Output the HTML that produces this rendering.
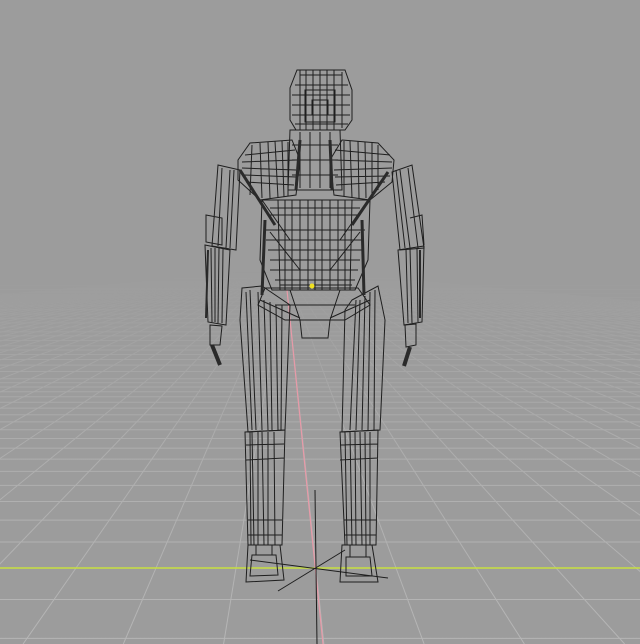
<!DOCTYPE html>
<html><head><meta charset="utf-8"><style>
html,body{margin:0;padding:0;background:#9c9c9c;width:640px;height:644px;overflow:hidden}
svg{display:block}
</style></head><body>
<svg id="s" width="640" height="644" viewBox="0 0 640 644" xmlns="http://www.w3.org/2000/svg">
<defs>
<linearGradient id="fg" x1="0" y1="0" x2="0" y2="1" gradientUnits="objectBoundingBox">
<stop offset="0" stop-color="#fff" stop-opacity="0"/>
<stop offset="0.42" stop-color="#fff" stop-opacity="0"/>
<stop offset="0.7" stop-color="#fff" stop-opacity="0.7"/>
<stop offset="1" stop-color="#fff" stop-opacity="1"/>
</linearGradient>
<mask id="m" maskUnits="userSpaceOnUse" x="0" y="0" width="640" height="644"><rect width="640" height="644" fill="url(#fg)"/></mask>
</defs>
<rect width="640" height="644" fill="#9c9c9c"/>
<g id="grid" stroke="#b6b6b6" stroke-width="1" fill="none" mask="url(#m)"></g>
<line x1="0" y1="568" x2="640" y2="568" stroke="#c8e040" stroke-width="1.5"/>
<line x1="287" y1="290" x2="323" y2="644" stroke="#e89aa8" stroke-width="1.2"/>
<g stroke="#1e1e1e" stroke-width="1" fill="none">
<line x1="315" y1="490" x2="317" y2="644"/>
<line x1="250" y1="560" x2="388" y2="578"/>
<line x1="278" y1="591" x2="345" y2="550"/>
<!-- head -->
<path d="M297 70 L345 70 L352 90 L352 120 L345 130 L296 130 L290 120 L290 88 Z"/>
<path d="M300 75 L342 75 M295 85 L348 85 M292 95 L350 95 M292 105 L350 105 M292 115 L350 115 M295 124 L348 124 M300 70 L300 130 M306 70 L306 130 M313 70 L313 130 M320 70 L320 130 M327 70 L327 130 M334 70 L334 130 M342 72 L342 128"/>
<path d="M305 90 L335 90 L335 122 L305 122 Z M312 100 L328 100 L328 115 L312 115 Z"/>
<!-- neck -->
<path d="M290 130 L340 130 L342 190 L288 190 Z M300 132 L300 188 M310 132 L310 188 M320 132 L320 188 M330 132 L330 188 M292 145 L338 145 M292 160 L338 160 M292 175 L338 175"/>
<!-- shoulder pads -->
<path d="M238 160 L250 143 L292 140 L300 160 L296 195 L260 200 L238 180 Z"/>
<path d="M342 140 L378 143 L394 160 L392 182 L370 200 L334 195 L330 160 Z"/>
<path d="M245 155 L295 150 M242 162 L296 160 M242 168 L296 170 M244 175 L296 177 M246 182 L294 185 M252 145 L250 195 M260 143 L262 198 M268 142 L270 198 M275 141 L278 198 M282 141 L284 197 M288 142 L288 196"/>
<path d="M335 150 L390 155 M334 160 L392 162 M334 170 L392 168 M335 177 L390 176 M336 185 L385 182 M344 141 L344 196 M350 141 L352 198 M358 141 L359 198 M365 142 L366 198 M372 143 L372 195 M378 145 L378 190"/>
<!-- torso -->
<path d="M262 200 L370 200 L368 260 L355 290 L272 290 L260 260 Z"/>
<path d="M270 208 L360 208 M270 215 L360 215 M265 230 L365 230 M266 240 L364 240 M268 250 L362 250 M270 260 L360 260 M270 270 L358 270 M275 280 L355 280 M278 200 L280 290 M285 200 L285 290 M292 200 L292 290 M300 200 L300 290 M308 200 L308 290 M315 200 L315 290 M322 200 L322 290 M330 200 L330 290 M338 200 L338 290 M345 200 L345 290 M352 200 L350 290"/>
<path d="M270 232 L300 270 M360 232 L330 270 M280 285 L352 285 M262 200 L290 240 M368 200 L340 240"/>
<!-- pelvis -->
<path d="M265 288 L358 288 L370 305 L345 320 L285 320 L258 305 Z"/>
<path d="M300 320 L330 320 L328 338 L302 338 Z M260 300 L300 318 M370 300 L330 318 M275 305 L355 305 M290 290 L300 320 M340 290 L330 320"/>
<!-- left arm -->
<path d="M218 165 L240 170 L236 250 L212 246 Z M222 168 L218 246 M230 170 L226 248 M234 170 L230 248 M206 215 L222 218 L222 245 L206 242 Z"/>
<path d="M205 245 L230 250 L226 325 L208 322 Z M211 248 L212 322 M215 248 L215 322 M219 248 L218 323 M223 249 L222 323"/>
<path d="M210 325 L222 326 L220 345 L210 345 Z"/>
<!-- right arm -->
<path d="M392 172 L412 165 L424 248 L400 250 Z M396 170 L405 248 M400 170 L410 248 M408 168 L418 248 M410 218 L422 215 L424 245"/>
<path d="M398 250 L424 246 L422 322 L404 325 Z M406 249 L408 323 M410 248 L412 323 M417 248 L418 322"/>
<path d="M405 325 L416 324 L416 345 L406 347 Z"/>
<!-- left leg -->
<path d="M242 288 L262 286 L290 305 L285 430 L248 432 L240 320 Z M246 292 L252 430 M250 290 L256 430 M258 292 L262 430 M264 300 L268 430 M270 302 L272 430 M276 305 L278 430 M282 305 L281 430"/>
<path d="M245 432 L285 430 L282 545 L248 545 Z M250 432 L251 545 M252 432 L254 545 M258 432 L258 545 M262 432 L264 545 M268 432 L268 545 M274 432 L275 545 M246 445 L284 444 M246 460 L284 458 M248 520 L282 520 M248 535 L282 535"/>
<path d="M248 545 L280 545 L284 580 L246 582 Z M252 555 L276 555 L278 575 L250 576 Z M256 545 L256 555 M272 545 L272 555"/>
<!-- right leg -->
<path d="M352 300 L378 286 L385 320 L380 430 L342 432 L345 310 Z M356 300 L350 430 M360 300 L356 430 M365 296 L362 430 M370 292 L368 430 M375 290 L374 430"/>
<path d="M340 432 L378 430 L376 545 L345 545 Z M345 432 L347 545 M350 432 L352 545 M355 432 L356 545 M360 432 L362 545 M365 432 L366 545 M370 432 L370 545 M340 445 L378 444 M340 460 L378 458 M344 520 L376 520 M344 535 L376 535"/>
<path d="M342 545 L372 545 L378 582 L340 582 Z M346 557 L370 557 L372 576 L346 576 Z M350 545 L350 557 M366 545 L366 557"/>
</g>
<g stroke="#2a2a2a" stroke-width="3" fill="none">
<line x1="240" y1="170" x2="275" y2="225"/>
<line x1="388" y1="172" x2="352" y2="225"/>
<line x1="300" y1="140" x2="296" y2="190"/>
<line x1="330" y1="140" x2="332" y2="190"/>
<line x1="265" y1="220" x2="262" y2="295"/>
<line x1="362" y1="220" x2="364" y2="295"/>
<line x1="212" y1="345" x2="220" y2="365" stroke-width="4"/>
<line x1="410" y1="347" x2="404" y2="366" stroke-width="4"/>
<line x1="208" y1="250" x2="206" y2="318" stroke-width="2"/>
<line x1="420" y1="250" x2="420" y2="318" stroke-width="2"/>
</g>
<circle cx="312" cy="286" r="2.5" fill="#f0e020"/>
</svg>
<script>
var g=document.getElementById('grid'),ns='http://www.w3.org/2000/svg',h=268,vx=285;
function L(x1,y1,x2,y2){var l=document.createElementNS(ns,'line');l.setAttribute('x1',x1);l.setAttribute('y1',y1);l.setAttribute('x2',x2);l.setAttribute('y2',y2);g.appendChild(l);}
var prev=1e9;
for(var n=-3;n<200;n++){var y=h+300/(1+0.095*n);if(y<280)break;if(y>644)continue;if(prev-y<4&&prev<1e8)continue;prev=y;L(0,y,640,y);}
for(var i=-40;i<40;i++){var off=31+80*i;var y0=272,y1=644;L(vx+off*(y0-h)/300,y0,vx+off*(y1-h)/300,y1);}
</script>
</body></html>
